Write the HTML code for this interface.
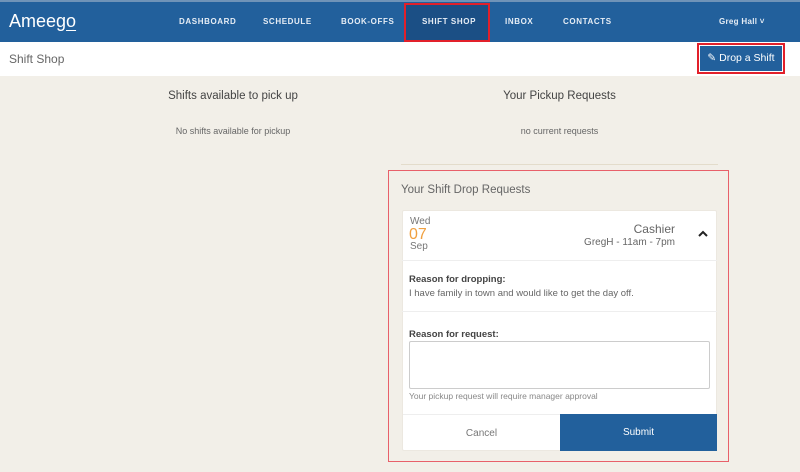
<!DOCTYPE html>
<html><head><style>
*{box-sizing:border-box;margin:0;padding:0}
body{width:800px;height:472px;overflow:hidden;background:#f2efe8;font-family:"Liberation Sans",sans-serif;position:relative;color:#555}
.a{position:absolute}
.nav{left:0;top:0;width:800px;height:42px;background:#22609c;border-top:2px solid #6f93b8}
.nl{top:17px;font-size:8px;font-weight:bold;color:#e6edf5;letter-spacing:.6px}
</style></head><body>
<div class="a nav"></div>
<div class="a" style="left:9px;top:11px;font-size:18px;color:#fff;">Ameeg<span style="text-decoration:underline;text-underline-offset:3px">o</span></div>
<div class="a nl" style="left:179px">DASHBOARD</div>
<div class="a nl" style="left:263px">SCHEDULE</div>
<div class="a nl" style="left:341px">BOOK-OFFS</div>
<div class="a" style="left:404px;top:3px;width:86px;height:39px;background:#1b4f85;border:2px solid #e2202a"></div>
<div class="a nl" style="left:422px">SHIFT SHOP</div>
<div class="a nl" style="left:505px">INBOX</div>
<div class="a nl" style="left:563px">CONTACTS</div>
<div class="a nl" style="left:719px;letter-spacing:.3px">Greg Hall ˅</div>
<div class="a" style="left:0;top:42px;width:800px;height:34px;background:#fff"></div>
<div class="a" style="left:9px;top:52px;font-size:12px;color:#666">Shift Shop</div>
<div class="a" style="left:697px;top:43px;width:88px;height:31px;border:2px solid #e2202a"></div>
<div class="a" style="left:700px;top:46px;width:82px;height:25px;background:#22609c;color:#fff;font-size:10.5px;line-height:25px;text-align:center">✎ Drop a Shift</div>
<div class="a" style="left:0;top:90px;width:466px;text-align:center;font-size:11.5px;color:#444">Shifts available to pick up</div>
<div class="a" style="left:0;top:126px;width:466px;text-align:center;font-size:9px;color:#666">No shifts available for pickup</div>
<div class="a" style="left:402px;top:90px;width:315px;text-align:center;font-size:11.5px;color:#444">Your Pickup Requests</div>
<div class="a" style="left:402px;top:126px;width:315px;text-align:center;font-size:9px;color:#666">no current requests</div>
<div class="a" style="left:401px;top:164px;width:317px;height:1px;background:#e3dccb"></div>
<div class="a" style="left:388px;top:170px;width:341px;height:292px;border:1px solid #e8606a"></div>
<div class="a" style="left:401px;top:184px;font-size:11.5px;color:#666">Your Shift Drop Requests</div>
<div class="a" style="left:402px;top:210px;width:315px;height:241px;background:#fff;border:1px solid #ece8e0;border-radius:2px"></div>
<div class="a" style="left:402px;top:260px;width:315px;height:1px;background:#eee"></div>
<div class="a" style="left:402px;top:311px;width:315px;height:1px;background:#eee"></div>
<div class="a" style="left:410px;top:216px;font-size:10px;color:#777">Wed</div>
<div class="a" style="left:409px;top:226px;font-size:16px;color:#f0a040">07</div>
<div class="a" style="left:410px;top:241px;font-size:10px;color:#777">Sep</div>
<div class="a" style="left:560px;top:222px;width:115px;text-align:right;font-size:12px;color:#666">Cashier</div>
<div class="a" style="left:560px;top:237px;width:115px;text-align:right;font-size:10px;color:#666">GregH - 11am - 7pm</div>
<svg class="a" style="left:698px;top:230px" width="10" height="7"><path d="M1 6L5 2L9 6" fill="none" stroke="#222" stroke-width="2"/></svg>
<div class="a" style="left:409px;top:274px;font-size:9.5px;font-weight:bold;color:#444">Reason for dropping:</div>
<div class="a" style="left:409px;top:288px;font-size:9.5px;color:#666">I have family in town and would like to get the day off.</div>
<div class="a" style="left:409px;top:329px;font-size:9.5px;font-weight:bold;color:#444">Reason for request:</div>
<div class="a" style="left:409px;top:341px;width:301px;height:48px;border:1px solid #ccc;border-radius:2px;background:#fff"></div>
<div class="a" style="left:409px;top:391px;font-size:8.5px;color:#888">Your pickup request will require manager approval</div>
<div class="a" style="left:403px;top:414px;width:157px;height:37px;border-top:1px solid #eee;text-align:center;line-height:37px;font-size:10px;color:#777">Cancel</div>
<div class="a" style="left:560px;top:414px;width:157px;height:37px;background:#22609c;text-align:center;line-height:37px;font-size:10px;color:#fff">Submit</div>
</body></html>
